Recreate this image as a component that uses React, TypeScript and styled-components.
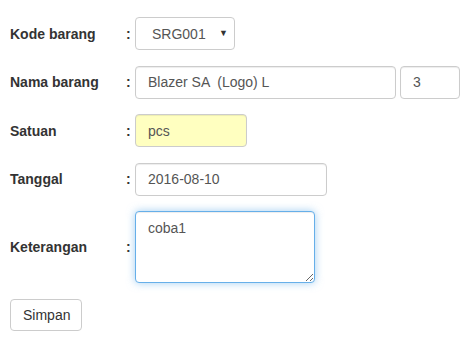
import { useEffect, useRef } from "react";
import styled, { createGlobalStyle } from "styled-components";

const GlobalStyle = createGlobalStyle`
  html, body {
    margin: 0;
    background: #fff;
    font-family: "Liberation Sans", Arial, sans-serif;
    font-size: 14px;
    color: #333;
  }
`;

const Form = styled.form`
  display: flex;
  flex-direction: column;
  gap: 15.5px;
  padding: 17px 10px 0;
`;

const Row = styled.div`
  display: grid;
  grid-template-columns: 116px 9px auto;
  align-items: center;
`;

const Label = styled.label`
  font-weight: bold;
  color: #333;
`;

const Colon = styled.span`
  font-weight: bold;
  color: #333;
  font-size: 14px;
`;

const Controls = styled.div`
  display: flex;
  gap: 4px;
`;

const Field = styled.input<{ $width: number; $bg?: string }>`
  box-sizing: border-box;
  width: ${(p) => p.$width}px;
  height: 33px;
  padding: 6px 12px;
  border: 1px solid #ccc;
  border-radius: 4px;
  background: ${(p) => p.$bg ?? "#fff"};
  box-shadow: inset 0 1px 1px rgba(0, 0, 0, 0.075);
  font-family: inherit;
  font-size: 14px;
  color: #555;
  outline: none;
`;

const SelectWrap = styled.div`
  position: relative;
  width: 100px;
`;

const Select = styled.select`
  box-sizing: border-box;
  width: 100px;
  height: 33px;
  padding: 6px 20px 6px 16px;
  border: 1px solid #ccc;
  border-radius: 4px;
  background: #fff;
  appearance: none;
  font-family: inherit;
  font-size: 14px;
  color: #555;
  outline: none;
`;

const Arrow = styled.span`
  position: absolute;
  right: 7px;
  top: 11px;
  font-size: 9px;
  color: #333;
  pointer-events: none;
`;

const TextArea = styled.textarea`
  box-sizing: border-box;
  width: 180px;
  height: 72px;
  padding: 6px 12px;
  border: 1px solid #66afe9;
  border-radius: 4px;
  box-shadow: inset 0 1px 1px rgba(0, 0, 0, 0.075),
    0 0 8px rgba(102, 175, 233, 0.6);
  font-family: inherit;
  font-size: 14px;
  line-height: 1.43;
  color: #555;
  caret-color: #333;
  outline: none;
  resize: both;
`;

const Button = styled.button`
  align-self: flex-start;
  box-sizing: border-box;
  width: 72px;
  height: 32px;
  padding: 6px 12px;
  border: 1px solid #ccc;
  border-radius: 4px;
  background: #fff;
  font-family: inherit;
  font-size: 14px;
  color: #333;
`;

export default function App(): React.ReactElement {
  const noteRef = useRef<HTMLTextAreaElement>(null);

  useEffect(() => {
    const el = noteRef.current;
    if (el) {
      el.focus();
      el.setSelectionRange(el.value.length, el.value.length);
    }
  }, []);

  return (
    <>
      <GlobalStyle />
      <Form onSubmit={(e) => e.preventDefault()}>
        <Row>
          <Label>Kode barang</Label>
          <Colon>:</Colon>
          <SelectWrap>
            <Select defaultValue="SRG001">
              <option value="SRG001">SRG001</option>
            </Select>
            <Arrow>▼</Arrow>
          </SelectWrap>
        </Row>
        <Row>
          <Label>Nama barang</Label>
          <Colon>:</Colon>
          <Controls>
            <Field $width={261} defaultValue="Blazer SA  (Logo) L" />
            <Field $width={60} defaultValue="3" />
          </Controls>
        </Row>
        <Row>
          <Label>Satuan</Label>
          <Colon>:</Colon>
          <Field $width={112} $bg="#ffffc0" defaultValue="pcs" />
        </Row>
        <Row>
          <Label>Tanggal</Label>
          <Colon>:</Colon>
          <Field $width={192} defaultValue="2016-08-10" />
        </Row>
        <Row>
          <Label>Keterangan</Label>
          <Colon>:</Colon>
          <TextArea ref={noteRef} defaultValue="coba1" />
        </Row>
        <Button type="submit">Simpan</Button>
      </Form>
    </>
  );
}
